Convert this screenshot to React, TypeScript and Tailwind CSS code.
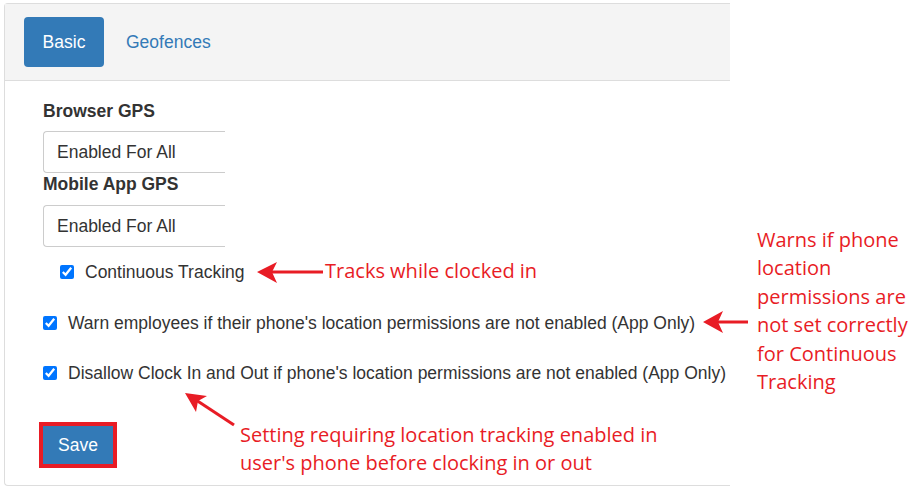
import React from "react";

const RED = "#e81c25";

function Check() {
  return (
    <input
      type="checkbox"
      defaultChecked
      className="w-[14px] h-[14px] m-0 accent-[#0075ff] shrink-0"
    />
  );
}

export default function App() {
  return (
    <div
      className="relative w-[920px] h-[489px] bg-white overflow-hidden pt-[3px] pl-[4px]"
      style={{ fontFamily: '"Liberation Sans", Arial, sans-serif' }}
    >
      <div className="w-[726px] border-l border-t border-b border-[#dddddd] rounded-bl-[4px] rounded-tl-[4px] text-[#333333]">
        <div className="h-[77px] bg-[#f4f4f4] border-b border-[#dddddd] px-[19px] pt-[13px] flex items-start gap-[22px]">
          <div className="h-[50px] w-[80px] bg-[#337ab7] rounded-[4px] text-white text-[17.5px] flex items-center justify-center">
            Basic
          </div>
          <div className="h-[50px] flex items-center text-[#337ab7] text-[17.5px]">
            Geofences
          </div>
        </div>
        <div className="pl-[38px] pt-[19px] pb-[21px] text-[17.5px]">
          <div className="h-[22px] leading-[22px] font-bold mb-[9px]">Browser GPS</div>
          <div className="w-[182px] h-[42px] border-l border-t border-b border-[#cccccc] rounded-l-[4px] pl-[13px] flex items-center">
            Enabled For All
          </div>
          <div className="h-[22px] leading-[22px] font-bold mb-[10px]">Mobile App GPS</div>
          <div className="w-[182px] h-[42px] border-l border-t border-b border-[#cccccc] rounded-l-[4px] pl-[13px] flex items-center">
            Enabled For All
          </div>
          <div className="mt-[14px] h-[22px] flex items-center pl-[17px] gap-[11px]">
            <Check />
            <span>Continuous Tracking</span>
          </div>
          <div className="mt-[29px] h-[22px] flex items-center gap-[11px]">
            <Check />
            <span>Warn employees if their phone's location permissions are not enabled (App Only)</span>
          </div>
          <div className="mt-[28px] h-[22px] flex items-center gap-[11px]">
            <Check />
            <span>Disallow Clock In and Out if phone's location permissions are not enabled (App Only)</span>
          </div>
          <div className="mt-[42px] w-[70px] h-[38px] bg-[#337ab7] text-white flex items-center justify-center outline-4 outline-solid outline-[#e81c25]">
            Save
          </div>
        </div>
      </div>

      {/* annotations */}
      <svg className="absolute left-0 top-0" width="920" height="489">
        <line x1="323" y1="272" x2="268" y2="272" stroke={RED} strokeWidth="3" />
        <polygon points="257,272 277,262 272,272 277,283" fill={RED} />
        <line x1="748" y1="322" x2="713" y2="322" stroke={RED} strokeWidth="3" />
        <polygon points="703,322 723,311 718,322 723,333" fill={RED} />
        <line x1="234" y1="425" x2="193" y2="398" stroke={RED} strokeWidth="3" />
        <polygon points="185,393 207,396 198,401 196,412" fill={RED} />
      </svg>
      <div
        className="absolute text-[20px] leading-[28.4px] text-[#e81c25] whitespace-nowrap"
        style={{ left: 325, top: 257, fontFamily: '"Open Sans", sans-serif' }}
      >
        Tracks while clocked in
      </div>
      <div
        className="absolute text-[20px] leading-[28.4px] text-[#e81c25] whitespace-nowrap"
        style={{ left: 757, top: 226, fontFamily: '"Open Sans", sans-serif' }}
      >
        Warns if phone<br />location<br />permissions are<br />not set correctly<br />for Continuous<br />Tracking
      </div>
      <div
        className="absolute text-[20px] leading-[28.4px] text-[#e81c25] whitespace-nowrap"
        style={{ left: 240, top: 421, fontFamily: '"Open Sans", sans-serif' }}
      >
        Setting requiring location tracking enabled in<br />user's phone before clocking in or out
      </div>
    </div>
  );
}
